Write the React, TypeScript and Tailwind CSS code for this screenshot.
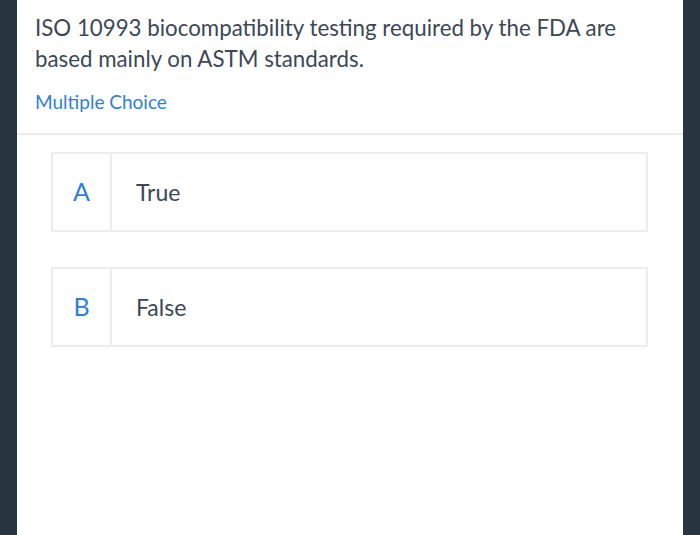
export default function App() {
  const options = [
    { letter: 'A', text: 'True' },
    { letter: 'B', text: 'False' },
  ];

  return (
    <div className="flex h-[535px] w-[700px] bg-[#283541] font-['Lato','Liberation_Sans',sans-serif]">
      <div className="ml-[17px] mr-[17px] flex-1 bg-white">
        <div className="border-b-2 border-[#ececee] px-[18px] pt-[12px] pb-[19px]">
          <p className="text-[22.3px] leading-[31px] text-[#3c4856]">
            ISO 10993 biocompatibility testing required by the FDA are based mainly on ASTM standards.
          </p>
          <p className="mt-[16px] text-[19px] leading-[24px] text-[#2f7ed6]">Multiple Choice</p>
        </div>
        <div className="flex flex-col gap-[35px] pl-[34px] pr-[35px] pt-[17px]">
          {options.map((o) => (
            <div key={o.letter} className="flex h-[80px] border-2 border-[#ececec]">
              <div className="flex w-[59px] items-center justify-center border-r-2 border-[#ececec] text-[25px] text-[#2f7ed6]">
                {o.letter}
              </div>
              <div className="flex items-center pl-[24px] text-[23px] text-[#3c4856]">{o.text}</div>
            </div>
          ))}
        </div>
      </div>
    </div>
  );
}
